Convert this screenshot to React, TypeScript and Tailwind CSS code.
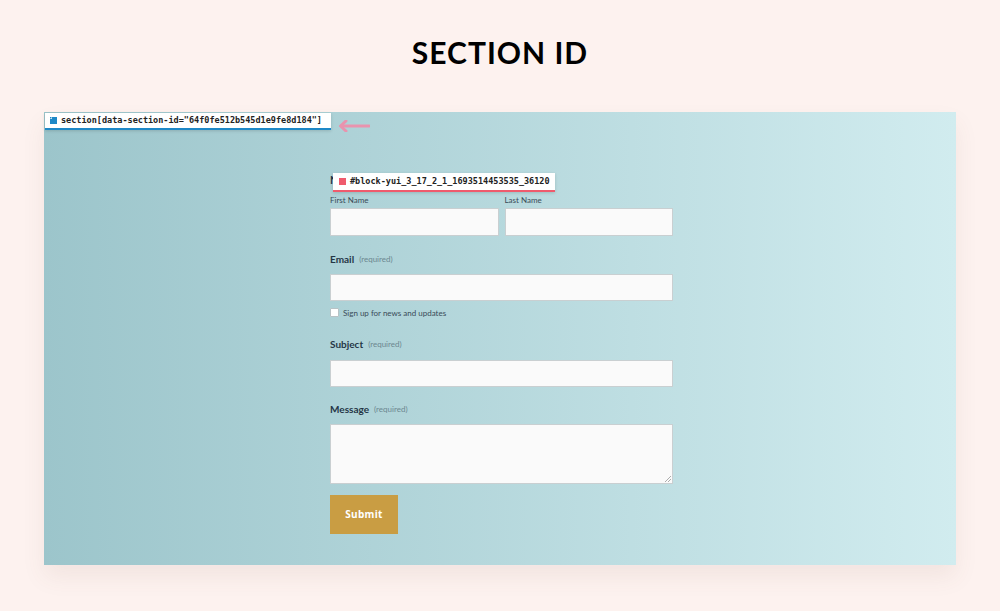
import React from "react";

const labelFont = { fontFamily: "Lato, 'Noto Sans', sans-serif" };
const monoFont = { fontFamily: "'DejaVu Sans Mono', 'Liberation Mono', monospace" };

function Req() {
  return <span className="ml-[5px] text-[8px] font-normal text-[#6c8790]">(required)</span>;
}

function Field({ className = "h-[27px]" }: { className?: string }) {
  return <div className={`w-full border border-[#c9cfd1] bg-[#fafafa] ${className}`} />;
}

export default function App() {
  return (
    <div className="min-h-[611px] w-full bg-[#fdf2ef] pt-[33px]" style={labelFont}>
      <h1 className="text-center text-[30px] font-bold leading-[38px] tracking-[1px] text-black">
        SECTION ID
      </h1>

      <section className="relative mx-[44px] mt-[41px] h-[453px] bg-linear-to-r from-[#9cc5cb] to-[#d1ecef] shadow-[0_12px_22px_rgba(120,80,70,0.08)]">
        {/* section selector tag */}
        <div
          className="absolute left-[1px] top-[1px] z-10 flex h-[17px] w-[286px] items-center gap-[4px] whitespace-nowrap border-b-[2px] border-[#1e88c7] bg-white pl-[5px] text-[8.5px] font-bold text-[#222] shadow-[0_1px_3px_rgba(0,0,0,0.15)]"
          style={monoFont}
        >
          <svg width="7" height="7" viewBox="0 0 7 7" className="shrink-0">
            <path d="M2 0H7V7H0V2H2Z" fill="#1e88c7" />
            <path d="M0 0H1.5V1.5H0Z" fill="#1e88c7" />
          </svg>
          <span>section[data-section-id="64f0fe512b545d1e9fe8d184"]</span>
        </div>

        {/* arrow */}
        <svg className="absolute left-[294px] top-[8px]" width="32" height="12" viewBox="0 0 32 12">
          <path d="M31 6H4" stroke="#e993ae" strokeWidth="3" strokeLinecap="round" />
          <path d="M8 1L2.5 6L8 11" stroke="#e993ae" strokeWidth="3" fill="none" strokeLinecap="round" strokeLinejoin="round" />
        </svg>

        {/* block selector tag */}
        <div
          className="absolute left-[289px] top-[61px] z-10 flex h-[19px] w-[222px] items-center gap-[4px] whitespace-nowrap border-b-[2px] border-[#ef5b6d] bg-white pl-[6px] text-[8.5px] font-bold text-[#222] shadow-[0_1px_3px_rgba(0,0,0,0.15)]"
          style={monoFont}
        >
          <span className="inline-block h-[7px] w-[7px] shrink-0 bg-[#ef5b6d]" />
          <span>#block-yui_3_17_2_1_1693514453535_36120</span>
        </div>

        <form className="ml-[286px] w-[343px] pt-[61px] text-[#253646]">
          <div className="h-[14px] text-[11px] font-bold leading-[14px]">Name</div>

          <div className="mt-[8px] flex gap-[6px]">
            <div className="flex-1">
              <div className="h-[10px] text-[8px] leading-[10px] text-[#3a4b58]">First Name</div>
              <Field className="mt-[3px] h-[28px]" />
            </div>
            <div className="flex-1">
              <div className="h-[10px] text-[8px] leading-[10px] text-[#3a4b58]">Last Name</div>
              <Field className="mt-[3px] h-[28px]" />
            </div>
          </div>

          <div className="mt-[17px] flex h-[12px] items-center text-[10px] font-bold">
            Email<Req />
          </div>
          <Field className="mt-[9px] h-[27px]" />

          <label className="mt-[7px] flex h-[9px] items-center gap-[4px] text-[8px] text-[#3a4b58]">
            <span className="inline-block h-[9px] w-[9px] rounded-[1px] border border-[#b8c2c5] bg-white" />
            Sign up for news and updates
          </label>

          <div className="mt-[21px] flex h-[12px] items-center text-[10px] font-bold">
            Subject<Req />
          </div>
          <Field className="mt-[10px] h-[27px]" />

          <div className="mt-[16px] flex h-[12px] items-center text-[10px] font-bold">
            Message<Req />
          </div>
          <div className="relative mt-[9px] h-[60px] w-full border border-[#c9cfd1] bg-[#fafafa]">
            <svg className="absolute bottom-[1px] right-[1px]" width="6" height="6" viewBox="0 0 6 6">
              <path d="M6 0L0 6M6 3L3 6" stroke="#999" strokeWidth="0.8" />
            </svg>
          </div>

          <button
            type="button"
            className="mt-[11px] flex h-[39px] w-[68px] items-center justify-center bg-[#c99d43] text-[10px] font-bold tracking-[0.3px] text-white"
            style={{ fontFamily: "'Open Sans', Lato, sans-serif" }}
          >
            Submit
          </button>
        </form>
      </section>
    </div>
  );
}
